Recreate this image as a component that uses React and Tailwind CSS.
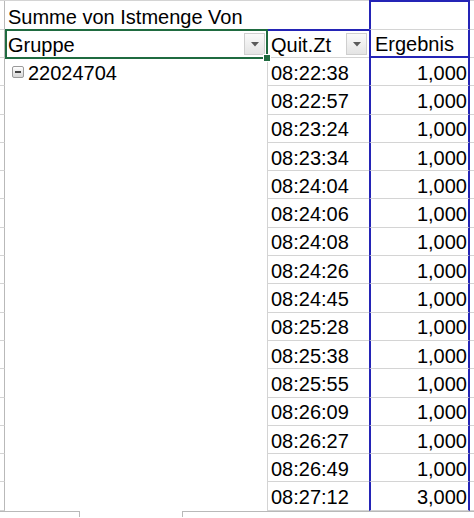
import React from 'react';

const rows = [
    { time: "08:22:38", value: "1,000" },
    { time: "08:22:57", value: "1,000" },
    { time: "08:23:24", value: "1,000" },
    { time: "08:23:34", value: "1,000" },
    { time: "08:24:04", value: "1,000" },
    { time: "08:24:06", value: "1,000" },
    { time: "08:24:08", value: "1,000" },
    { time: "08:24:26", value: "1,000" },
    { time: "08:24:45", value: "1,000" },
    { time: "08:25:28", value: "1,000" },
    { time: "08:25:38", value: "1,000" },
    { time: "08:25:55", value: "1,000" },
    { time: "08:26:09", value: "1,000" },
    { time: "08:26:27", value: "1,000" },
    { time: "08:26:49", value: "1,000" },
    { time: "08:27:12", value: "3,000" },
];

const FilterButton = () => (
    <div className="w-[21px] h-[22px] border border-[#cfcfcf] bg-gradient-to-b from-[#fafafa] to-[#e4e4e4] flex items-center justify-center shrink-0">
        <svg width="8" height="5" viewBox="0 0 8 5">
            <path d="M0 0 L8 0 L4 4.5 Z" fill="#5a5a5a" />
        </svg>
    </div>
);

const MinusBox = () => (
    <div className="w-[12px] h-[12px] border border-[#9a9a9a] rounded-[2px] bg-gradient-to-b from-[#ffffff] to-[#d6d6d6] flex items-center justify-center shrink-0">
        <div className="w-[6px] h-[1.5px] bg-[#444]" />
    </div>
);

export default function App() {
    return (
        <div className="w-[474px] h-[518px] bg-white overflow-hidden text-black text-[20px] leading-none font-['Liberation_Sans',Arial,sans-serif]">
            {/* Row 1 */}
            <div className="grid grid-cols-[5px_263px_101px_101px_4px] h-[30px] border-t border-[#d4d4d4]">
                <div className="border-r border-[#b9b9b9] border-b border-b-[#d4d4d4]" />
                <div className="col-span-2 flex items-center pl-[3px] pt-[3px] whitespace-nowrap border-b border-[#d4d4d4]">
                    Summe von Istmenge Von
                </div>
                <div className="border-x-2 border-t-2 border-x-[#2424b6] border-t-[#2424b6] -mt-px border-b border-b-[#d4d4d4]" />
                <div className="border-b border-[#d4d4d4]" />
            </div>

            {/* Row 2: headers */}
            <div className="grid grid-cols-[5px_263px_101px_101px_4px] h-[28px]">
                <div className="border-r border-[#b9b9b9] border-b border-b-[#d4d4d4]" />
                <div className="relative border-2 border-[#1f6b40] -my-px flex items-center justify-between pl-[1px] pr-[1px]">
                    <span className="pt-[2px]">Gruppe</span>
                    <FilterButton />
                    <div className="absolute -right-[4px] -bottom-[4px] w-[6px] h-[6px] bg-[#1f6b40] ring-1 ring-white" />
                </div>
                <div className="border-t-2 border-[#2424b6] -mt-px border-b border-b-[#d4d4d4] flex items-center justify-between pl-[3px] pr-[2px]">
                    <span className="pt-[2px]">Quit.Zt</span>
                    <FilterButton />
                </div>
                <div className="border-x-2 border-b-2 border-[#2424b6] flex items-center pl-[4px]">
                    <span className="pt-[2px]">Ergebnis</span>
                </div>
                <div className="border-b border-[#d4d4d4]" />
            </div>

            {/* Data rows */}
            {rows.map((row, index) => (
                <div key={index} className="grid grid-cols-[5px_263px_101px_101px_4px] h-[28.3px]">
                    <div className="border-r border-[#b9b9b9] border-b border-b-[#d4d4d4]" />
                    <div className="border-r border-[#d4d4d4] flex items-center pl-[7px] gap-[4px]">
                        {index === 0 && (
                            <>
                                <MinusBox />
                                <span className="pt-[2px]">22024704</span>
                            </>
                        )}
                    </div>
                    <div className="border-b border-[#d4d4d4] flex items-center pl-[3px]">
                        <span className="pt-[2px]">{row.time}</span>
                    </div>
                    <div className="border-x-2 border-x-[#2424b6] border-b border-b-[#d4d4d4] flex items-center justify-end pr-[1px]">
                        <span className="pt-[2px]">{row.value}</span>
                    </div>
                    <div className="border-b border-[#d4d4d4]" />
                </div>
            ))}

            {/* Sheet tab strip */}
            <div className="flex h-[6px]">
                <div className="w-[80px] border-t border-r border-[#b9b9b9]" />
                <div className="w-[102px]" />
                <div className="flex-1 border-t border-l border-[#b9b9b9]" />
            </div>
        </div>
    );
}
